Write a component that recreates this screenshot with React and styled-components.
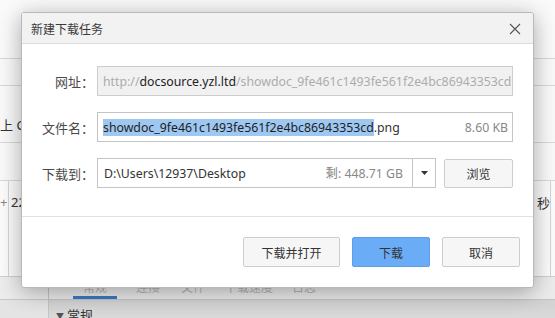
import React from "react";
import styled, { createGlobalStyle } from "styled-components";

const Global = createGlobalStyle`
  html, body { margin: 0; padding: 0; background: #f7f7f7; }
  body { font-family: "Noto Sans", "Noto Sans CJK SC", sans-serif; }
`;

const Page = styled.div`
  position: relative;
  width: 555px;
  height: 318px;
  overflow: hidden;
  background: #f7f7f7;
  font-family: "Noto Sans", "Noto Sans CJK SC", sans-serif;
`;

/* ---------- underlying application (background) ---------- */
const Backdrop = styled.div`
  display: flex;
  flex-direction: column;
  height: 100%;
`;

const BgRow = styled.div`
  flex-shrink: 0;
  height: ${(p) => p.$h}px;
  box-sizing: border-box;
  border-bottom: 1px solid #d8d8d8;
  background: ${(p) => p.$bg || "#f9f9f9"};
  display: flex;
  align-items: ${(p) => p.$align || "center"};
  justify-content: space-between;
  font-size: 13px;
  color: #333;
`;

const BgCell = styled.div`
  padding-top: ${(p) => p.$pt || 0}px;
  white-space: nowrap;
`;

const TableRow = styled.div`
  flex-shrink: 0;
  height: 96px;
  box-sizing: border-box;
  border-bottom: 1px solid #cfcfcf;
  background: #fbfbfb;
  display: grid;
  grid-template-columns: 9px 1fr 4px;
  font-size: 13px;
  color: #333;
`;

const TableCell = styled.div`
  border-right: ${(p) => (p.$line ? "1px solid #d4d4d4" : "none")};
  display: flex;
  justify-content: space-between;
  padding: 12px 0 0 ${(p) => p.$pl || 0}px;
  white-space: nowrap;
  overflow: hidden;
  color: #888;
`;

const CellText = styled.span`
  color: #333;
`;

const BottomPanel = styled.div`
  flex: 1;
  min-height: 0;
  overflow: hidden;
  display: grid;
  grid-template-columns: 49px 1fr;
  background: #e4e4e4;
`;

const SidePane = styled.div`
  border-right: 1px solid #c4c4c4;
  display: flex;
  flex-direction: column;
`;

const SideTop = styled.div`
  height: 22px;
  border-bottom: 1px solid #c8c8c8;
  background: #ececec;
`;

const Detail = styled.div`
  display: flex;
  flex-direction: column;
`;

const Tabs = styled.div`
  flex-shrink: 0;
  height: 23px;
  box-sizing: border-box;
  border-bottom: 1px solid #c4c4c4;
  background: #ebebeb;
  display: flex;
  gap: 16px;
  padding-left: 24px;
  align-items: flex-end;
`;

const Tab = styled.div`
  font-size: 12px;
  line-height: 14px;
  color: #b4b4b4;
  padding: 0 2px 1px;
  border-bottom: 3px solid ${(p) => (p.$active ? "#3c78c3" : "transparent")};
  width: ${(p) => p.$w}px;
  white-space: nowrap;
  text-align: center;
`;

const Section = styled.div`
  flex: 1;
  background: linear-gradient(#d2d2d2, #dcdcdc);
  font-size: 13px;
  color: #333;
  padding: 5px 0 0 7px;
  white-space: nowrap;
  display: flex;
  gap: 3px;
  align-items: flex-start;
`;

const Caret = styled.span`
  font-size: 8px;
  color: #555;
  padding-top: 5px;
`;

/* ---------- dialog ---------- */
const Dialog = styled.div`
  position: absolute;
  left: 21px;
  top: 12px;
  width: 513px;
  box-sizing: border-box;
  background: #fff;
  border: 1px solid #b9b9b9;
  border-radius: 3px;
  box-shadow: 0 4px 22px rgba(0, 0, 0, 0.33);
  display: flex;
  flex-direction: column;
  overflow: hidden;
`;

const TitleBar = styled.div`
  height: 30px;
  background: #f2f2f2;
  border-bottom: 1px solid #dcdcdc;
  display: flex;
  align-items: center;
  justify-content: space-between;
  padding: 0 12px 0 9px;
`;

const Title = styled.div`
  font-family: "Noto Sans CJK SC", sans-serif;
  font-size: 12px;
  color: #3a3a3a;
`;

const CloseBtn = styled.button`
  border: none;
  background: transparent;
  padding: 0;
  width: 12px;
  height: 12px;
  display: flex;
  margin-top: 2px;
`;

const Body = styled.div`
  display: grid;
  grid-template-columns: 72px 1fr;
  column-gap: 3px;
  row-gap: 16px;
  padding: 22px 20px 28px 0;
`;

const Label = styled.div`
  font-family: "Noto Sans CJK SC", sans-serif;
  font-size: 13px;
  color: #4a4a4a;
  display: flex;
  align-items: center;
  justify-content: flex-end;
  height: 30px;
`;

const Field = styled.div`
  height: 30px;
  box-sizing: border-box;
  border: 1px solid ${(p) => (p.$disabled ? "#cdcdcd" : "#c4c4c4")};
  background: ${(p) => (p.$disabled ? "#f1f1f1" : "#fff")};
  display: flex;
  align-items: center;
  padding: 0 4px 0 5px;
  font-size: 12.3px;
  color: #333;
  white-space: nowrap;
  overflow: hidden;
  min-width: 0;
`;

const Faint = styled.span`
  color: #acacac;
`;

const Strong = styled.span`
  color: #222;
`;

const Selected = styled.span`
  background: #9ec8f2;
  color: #1e1e1e;
`;

const Grow = styled.span`
  flex: 1;
  overflow: hidden;
`;

const Meta = styled.span`
  color: #888;
  font-size: 12.3px;
`;

const SaveRow = styled.div`
  display: flex;
  gap: 8px;
  align-items: center;
`;

const Combo = styled.div`
  flex: 1;
  height: 30px;
  box-sizing: border-box;
  border: 1px solid #c4c4c4;
  background: #fff;
  display: flex;
  align-items: stretch;
  font-size: 12.3px;
  color: #333;
  white-space: nowrap;
  min-width: 0;
`;

const ComboText = styled.div`
  flex: 1;
  display: flex;
  align-items: center;
  padding: 0 9px 0 6px;
  min-width: 0;
`;

const DropBtn = styled.div`
  width: 22px;
  border-left: 1px solid #c4c4c4;
  display: flex;
  align-items: center;
  justify-content: center;
`;

const Button = styled.button`
  width: ${(p) => p.$w}px;
  height: ${(p) => p.$h || 30}px;
  box-sizing: border-box;
  border: 1px solid ${(p) => (p.$primary ? "#5c9ee9" : "#cdcdcd")};
  background: ${(p) => (p.$primary ? "#6aacf6" : "#f6f6f6")};
  border-radius: 2px;
  font-family: "Noto Sans CJK SC", sans-serif;
  font-size: 12px;
  color: #333;
  padding: 0;
  cursor: pointer;
`;

const Footer = styled.div`
  border-top: 1px solid #e2e2e2;
  padding: 20px 13px 20px;
  display: flex;
  justify-content: flex-end;
  gap: 12px;
`;

export default function App() {
  return (
    <Page>
      <Global />
      <Backdrop>
        <BgRow $h={59} $bg="#fafafa" />
        <BgRow $h={27} />
        <BgRow $h={57} $align="flex-start">
          <BgCell $pt={29}>上 Co</BgCell>
        </BgRow>
        <BgRow $h={38} />
        <TableRow>
          <TableCell $line>+</TableCell>
          <TableCell $line $pl={2}>
            <CellText>22</CellText>
            <CellText>秒</CellText>
          </TableCell>
          <TableCell />
        </TableRow>
        <BottomPanel>
          <SidePane>
            <SideTop />
          </SidePane>
          <Detail>
            <Tabs>
              <Tab $active $w={40}>常规</Tab>
              <Tab $w={26}>连接</Tab>
              <Tab $w={24}>文件</Tab>
              <Tab $w={46}>下载速度</Tab>
              <Tab $w={26}>日志</Tab>
            </Tabs>
            <Section>
              <Caret>▼</Caret>
              <span>常规</span>
            </Section>
          </Detail>
        </BottomPanel>
      </Backdrop>

      <Dialog>
        <TitleBar>
          <Title>新建下载任务</Title>
          <CloseBtn aria-label="关闭">
            <svg width="12" height="12" viewBox="0 0 12 12">
              <path d="M1 1 L11 11 M11 1 L1 11" stroke="#555" strokeWidth="1.1" fill="none" />
            </svg>
          </CloseBtn>
        </TitleBar>

        <Body>
          <Label>网址：</Label>
          <Field $disabled>
            <Faint>http://</Faint>
            <Strong>docsource.yzl.ltd</Strong>
            <Faint>/showdoc_9fe461c1493fe561f2e4bc86943353cd</Faint>
          </Field>

          <Label>文件名：</Label>
          <Field>
            <Grow>
              <Selected>showdoc_9fe461c1493fe561f2e4bc86943353cd</Selected>
              .png
            </Grow>
            <Meta>8.60 KB</Meta>
          </Field>

          <Label>下载到：</Label>
          <SaveRow>
            <Combo>
              <ComboText>
                <Grow>D:\Users\12937\Desktop</Grow>
                <Meta>剩: 448.71 GB</Meta>
              </ComboText>
              <DropBtn>
                <svg width="7" height="4" viewBox="0 0 7 4">
                  <path d="M0 0 H7 L3.5 4 Z" fill="#333" />
                </svg>
              </DropBtn>
            </Combo>
            <Button $w={69} $h={29}>浏览</Button>
          </SaveRow>
        </Body>

        <Footer>
          <Button $w={97}>下载并打开</Button>
          <Button $w={78} $primary>下载</Button>
          <Button $w={78}>取消</Button>
        </Footer>
      </Dialog>
    </Page>
  );
}
